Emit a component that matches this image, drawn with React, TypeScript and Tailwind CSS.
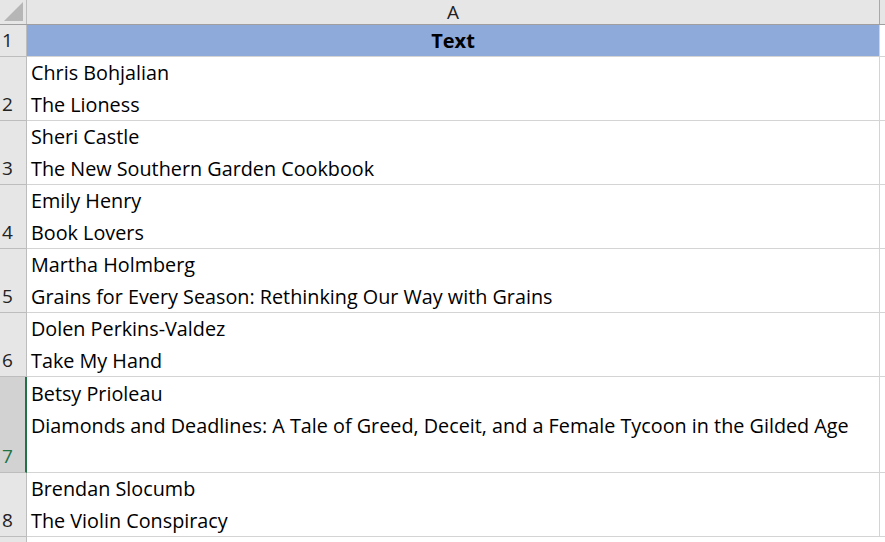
const rows: { n: number; lines: string[]; h: string }[] = [
  { n: 2, lines: ["Chris Bohjalian", "The Lioness"], h: "h-[64px]" },
  { n: 3, lines: ["Sheri Castle", "The New Southern Garden Cookbook"], h: "h-[64px]" },
  { n: 4, lines: ["Emily Henry", "Book Lovers"], h: "h-[64px]" },
  { n: 5, lines: ["Martha Holmberg", "Grains for Every Season: Rethinking Our Way with Grains"], h: "h-[64px]" },
  { n: 6, lines: ["Dolen Perkins-Valdez", "Take My Hand"], h: "h-[64px]" },
  {
    n: 7,
    lines: ["Betsy Prioleau", "Diamonds and Deadlines: A Tale of Greed, Deceit, and a Female Tycoon in the Gilded Age", ""],
    h: "h-[96px]",
  },
  { n: 8, lines: ["Brendan Slocumb", "The Violin Conspiracy"], h: "h-[64px]" },
];

const font = { fontFamily: "'Open Sans', 'Liberation Sans', sans-serif" };

export default function App() {
  return (
    <div className="w-[885px] h-[542px] overflow-hidden bg-white text-black" style={font}>
      {/* column header */}
      <div className="flex h-[25px] bg-[#e6e6e6] border-b border-[#9f9f9f]">
        <div className="w-[27px] shrink-0 border-r border-[#bdbdbd] flex items-end justify-end p-[3px]">
          <div className="w-0 h-0 border-l-[19px] border-l-transparent border-b-[19px] border-b-[#b6b6b6]" />
        </div>
        <div className="w-[853px] shrink-0 border-r border-[#a8a8a8] flex items-center justify-center text-[19px] text-[#222]">
          A
        </div>
        <div className="flex-1" />
      </div>

      {/* row 1 */}
      <div className="flex h-[32px]">
        <div className="w-[27px] shrink-0 bg-[#e6e6e6] border-r border-b border-[#bdbdbd] flex items-end pl-[2px] text-[19px] leading-[32px] text-[#222]">
          1
        </div>
        <div className="w-[853px] shrink-0 bg-[#8eaadb] border-b border-r border-[#d4d4d4] flex items-center justify-center font-bold text-[20px] leading-[33px]">
          Text
        </div>
        <div className="flex-1 border-b border-[#d4d4d4]" />
      </div>

      {rows.map((r) => {
        const sel = r.n === 7;
        return (
          <div key={r.n} className={`flex ${r.h}`}>
            <div
              className={
                sel
                  ? "w-[27px] shrink-0 bg-[#d2d2d2] border-r-2 border-r-[#217346] border-b border-b-[#bdbdbd] flex items-end pl-[2px] text-[19px] leading-[32px] text-[#217346]"
                  : "w-[27px] shrink-0 bg-[#e6e6e6] border-r border-b border-[#bdbdbd] flex items-end pl-[2px] text-[19px] leading-[32px] text-[#222]"
              }
            >
              {r.n}
            </div>
            <div className="w-[853px] shrink-0 border-b border-r border-[#d4d4d4] pl-[4px] flex flex-col justify-end text-[19.8px] whitespace-nowrap">
              {r.lines.map((l, i) => (
                <div key={i} className="h-[32px] leading-[34px]">
                  {l}
                </div>
              ))}
            </div>
            <div className="flex-1 border-b border-[#d4d4d4]" />
          </div>
        );
      })}
      <div className="flex h-[20px]">
        <div className="w-[27px] shrink-0 bg-[#e6e6e6] border-r border-[#bdbdbd]" />
      </div>
    </div>
  );
}
